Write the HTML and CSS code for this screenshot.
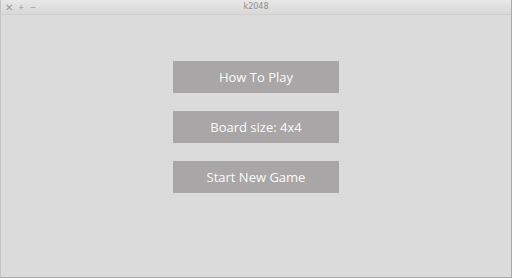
FILE: index.html
```html
<!DOCTYPE html>
<html lang="en">
<head>
  <meta charset="UTF-8" />
  <title>k2048</title>
  <link rel="stylesheet" href="styles.css">
</head>
<body>
  <div class="window">
    <div class="titlebar">
      <div class="controls">
        <span class="ctl">&#x2715;</span>
        <span class="ctl">+</span>
        <span class="ctl">&minus;</span>
      </div>
      <div class="title">k2048</div>
    </div>
    <div class="content">
      <div class="menu">
        <button class="menu-button">How To Play</button>
        <button class="menu-button">Board size: 4x4</button>
        <button class="menu-button">Start New Game</button>
      </div>
    </div>
  </div>
</body>
</html>
```

FILE: styles.css
```css
html, body {
  margin: 0;
  padding: 0;
}
body {
  width: 512px;
  height: 278px;
  overflow: hidden;
  font-family: "Open Sans", "Noto Sans", sans-serif;
}
.window {
  box-sizing: border-box;
  width: 512px;
  height: 278px;
  background: #dbdbdb;
  border-right: 1px solid #a8a8a8;
  border-bottom: 1px solid #a8a8a8;
  border-left: 1px solid #c4c4c4;
  display: flex;
  flex-direction: column;
}
.titlebar {
  height: 14px;
  position: relative;
  background: linear-gradient(#e8e8e8, #d8d8d8);
  border-bottom: 1px solid #cfcfcf;
}
.controls {
  display: flex;
  gap: 4px;
  padding-left: 4px;
}
.ctl {
  width: 8px;
  font-size: 10px;
  line-height: 14px;
  color: #9a9a9a;
  text-align: center;
}
.title {
  position: absolute;
  left: 0;
  right: 0;
  top: 0;
  text-align: center;
  font-size: 8px;
  line-height: 14px;
  color: #8e8e8e;
  font-family: "DejaVu Sans", sans-serif;
}
.content {
  flex: 1;
  display: flex;
  justify-content: center;
  padding-top: 46px;
}
.menu {
  display: flex;
  flex-direction: column;
  gap: 18px;
}
.menu-button {
  width: 166px;
  height: 32px;
  background: #a8a6a6;
  border: none;
  padding: 0;
  color: #fbfbfb;
  font-family: "Open Sans", "Noto Sans", sans-serif;
  font-size: 13px;
}
```
